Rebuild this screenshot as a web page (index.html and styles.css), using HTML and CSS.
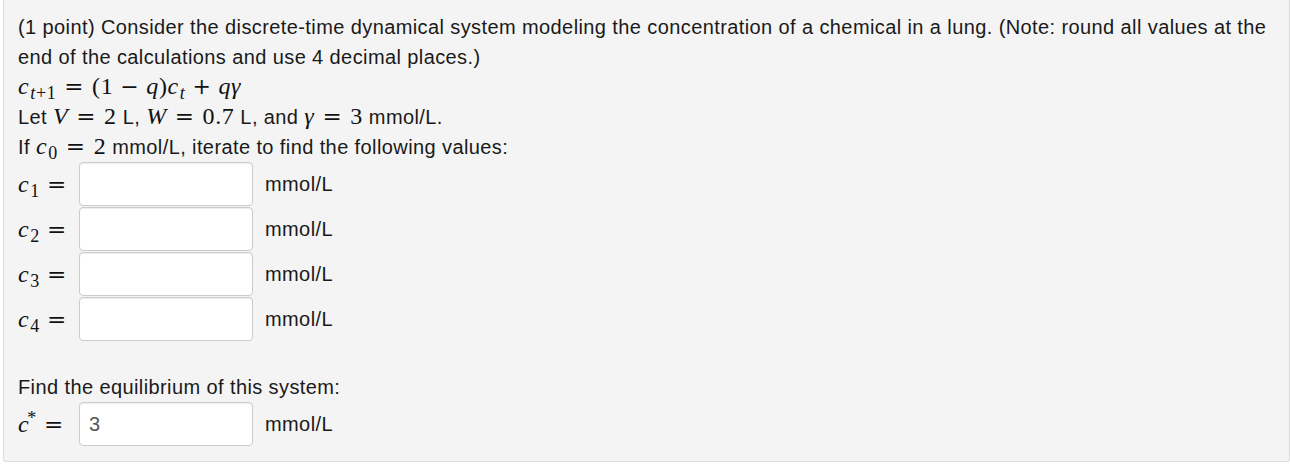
FILE: index.html
```html
<!DOCTYPE html>
<html>
<head>
<meta charset="utf-8">
<link rel="stylesheet" href="styles.css">
</head>
<body>
<div class="panel">
  <p class="txt">(1 point) Consider the discrete-time dynamical system modeling the concentration of a chemical in a lung. (Note: round all values at the end of the calculations and use 4 decimal places.)</p>
  <div class="txt"><span class="m"><i>c</i><sub><i>t</i>+1</sub><span class="op">=</span>(1<span class="bo">−</span><i>q</i>)<i>c</i><sub><i>t</i></sub><span class="bo">+</span><i>qγ</i></span></div>
  <div class="txt">Let <span class="m"><i>V</i><span class="op">=</span>2</span> L, <span class="m"><i>W</i><span class="op">=</span>0.7</span> L, and <span class="m"><i>γ</i><span class="op">=</span>3</span> mmol/L.</div>
  <div class="txt">If <span class="m"><i>c</i><sub>0</sub><span class="op">=</span>2</span> mmol/L, iterate to find the following values:</div>
  <div class="rows">
    <div class="row"><span class="lbl m"><i>c</i><sub>1</sub><span class="op">=</span></span><input class="box" type="text"><span class="unit">mmol/L</span></div>
    <div class="row"><span class="lbl m"><i>c</i><sub>2</sub><span class="op">=</span></span><input class="box" type="text"><span class="unit">mmol/L</span></div>
    <div class="row"><span class="lbl m"><i>c</i><sub>3</sub><span class="op">=</span></span><input class="box" type="text"><span class="unit">mmol/L</span></div>
    <div class="row"><span class="lbl m"><i>c</i><sub>4</sub><span class="op">=</span></span><input class="box" type="text"><span class="unit">mmol/L</span></div>
  </div>
  <div class="txt find">Find the equilibrium of this system:</div>
  <div class="row"><span class="lbl m"><i>c</i><sup>*</sup><span class="op">=</span></span><input class="box" type="text" value="3"><span class="unit">mmol/L</span></div>
</div>
</body>
</html>
```

FILE: styles.css
```css
html, body {
  margin: 0;
  padding: 0;
  background: #ffffff;
}
body {
  font-family: "Liberation Sans", Arial, sans-serif;
  font-size: 20px;
  letter-spacing: 0.4px;
  color: #1a1a1a;
}
.panel {
  margin: -6px 0 0 3px;
  padding: 18px 14px 15px 14px;
  background: #f4f4f4;
  border: 1px solid #dcdcdc;
  border-top: none;
  border-radius: 0 0 4px 4px;
  box-shadow: 0 1px 1px rgba(0,0,0,0.06);
}
.txt {
  margin: 0;
  line-height: 30px;
}
.m {
  font-family: "Liberation Serif", "Times New Roman", serif;
  font-size: 24px;
  line-height: 0;
  letter-spacing: 0.6px;
  color: #111;
}
.m i {
  font-style: italic;
}
.m sub, .m sup {
  font-size: 18px;
  line-height: 0;
}
.m sub {
  vertical-align: -5px;
  margin-left: 1px;
}
.m sup {
  vertical-align: 8px;
  margin-left: -2px;
}
.op {
  font-family: "DejaVu Serif", serif;
  font-size: 23px;
  margin: 0 8px;
}
.lbl .op {
  margin: 0 7px;
}
.bo {
  font-family: "DejaVu Serif", serif;
  font-size: 22px;
  margin: 0 7px;
}
.rows {
  display: flex;
  flex-direction: column;
  gap: 1px;
}
.row {
  display: flex;
  align-items: center;
  height: 44px;
}
.lbl {
  width: 61px;
  flex: none;
  line-height: 44px;
}
.box {
  width: 174px;
  height: 44px;
  box-sizing: border-box;
  border: 1px solid #cccccc;
  border-radius: 4px;
  background: #ffffff;
  box-shadow: inset 0 1px 1px rgba(0,0,0,0.075);
  font-family: "Liberation Sans", Arial, sans-serif;
  font-size: 20px;
  color: #555;
  padding: 0 9px;
  margin: 0;
  outline: none;
  flex: none;
}
.unit {
  margin-left: 12px;
}
.find {
  margin-top: 31px;
}
```
